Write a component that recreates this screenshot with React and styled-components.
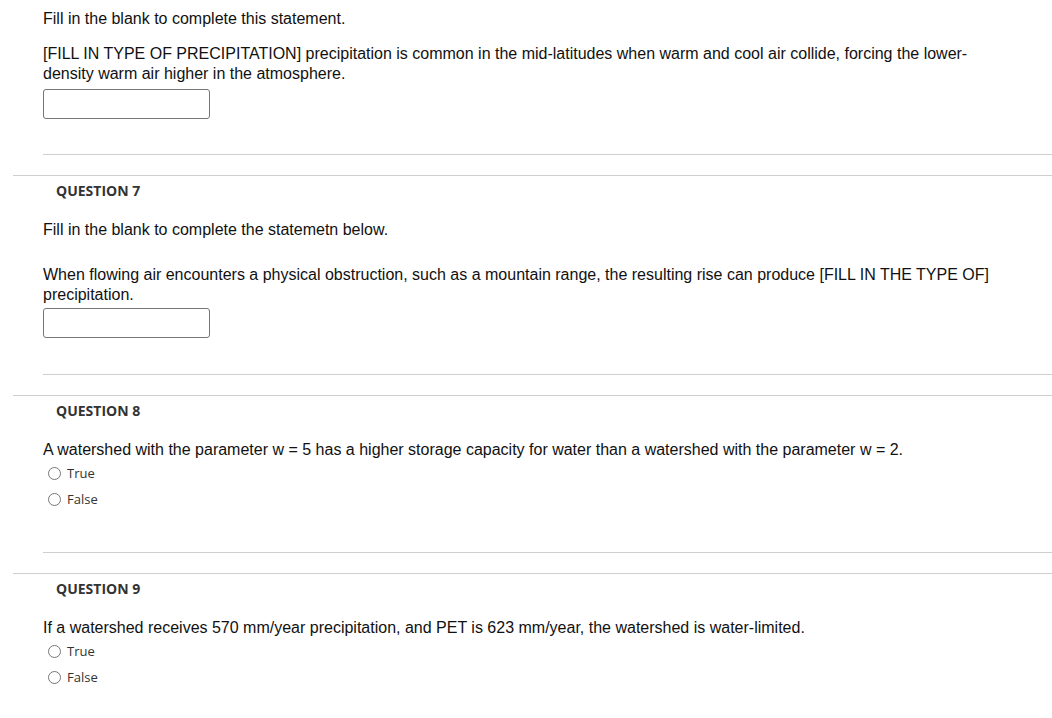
import { createGlobalStyle, styled } from "styled-components";

const GlobalStyle = createGlobalStyle`
  body {
    margin: 0;
    background: #ffffff;
    font-family: "Liberation Sans", Arial, sans-serif;
  }
`;

const Page = styled.div`
  width: 1052px;
  display: flex;
  flex-direction: column;
  padding-bottom: 30px;
`;

const Body = styled.div`
  padding-left: 43px;
  display: flex;
  flex-direction: column;
`;

const Text = styled.p`
  margin: ${(p) => p.$top || 0}px 0 0 0;
  max-width: 962px;
  font-size: 16px;
  line-height: 20px;
  color: #111;
`;

const BlankInput = styled.input`
  margin-top: ${(p) => p.$top || 0}px;
  width: 167px;
  height: 30px;
  box-sizing: border-box;
  border: 1px solid #767676;
  border-radius: 3px;
  outline: none;
  padding: 4px 6px;
  font-size: 14px;
`;

const Rule = styled.div`
  height: 1px;
  background: #cfcfcf;
  margin-left: ${(p) => p.$indent}px;
  margin-top: ${(p) => p.$top || 0}px;
`;

const Heading = styled.h3`
  margin: 5px 0 0 0;
  padding-left: 56px;
  font-family: "Open Sans", sans-serif;
  font-weight: 700;
  font-size: 14px;
  line-height: normal;
  color: #333;
`;

const Options = styled.div`
  margin-top: 4px;
  display: flex;
  flex-direction: column;
  gap: 8px;
  padding-left: 5px;
`;

const Option = styled.label`
  display: flex;
  align-items: center;
  gap: 6px;
  font-family: "Open Sans", sans-serif;
  font-size: 13px;
  line-height: normal;
  color: #333;
`;

const Radio = styled.input`
  appearance: none;
  margin: 0;
  width: 13px;
  height: 13px;
  border: 1px solid #767676;
  border-radius: 50%;
  background: #fff;
`;

const TrueFalse = ({ name }) => (
  <Options>
    <Option>
      <Radio type="radio" name={name} />
      True
    </Option>
    <Option>
      <Radio type="radio" name={name} />
      False
    </Option>
  </Options>
);

const App = () => {
  return (
    <Page>
      <GlobalStyle />
      <Body>
        <Text $top={9}>Fill in the blank to complete this statement.</Text>
        <Text $top={15}>
          [FILL IN TYPE OF PRECIPITATION] precipitation is common in the
          mid-latitudes when warm and cool air collide, forcing the lower-density
          warm air higher in the atmosphere.
        </Text>
        <BlankInput $top={5} />
      </Body>
      <Rule $indent={43} $top={35} />

      <Rule $indent={13} $top={20} />
      <Heading>QUESTION 7</Heading>
      <Body>
        <Text $top={20}>Fill in the blank to complete the statemetn below.</Text>
        <Text $top={25}>
          When flowing air encounters a physical obstruction, such as a mountain
          range, the resulting rise can produce [FILL IN THE TYPE OF]
          precipitation.
        </Text>
        <BlankInput $top={3} />
      </Body>
      <Rule $indent={43} $top={36} />

      <Rule $indent={13} $top={20} />
      <Heading>QUESTION 8</Heading>
      <Body>
        <Text $top={20}>
          A watershed with the parameter w = 5 has a higher storage capacity for
          water than a watershed with the parameter w = 2.
        </Text>
        <TrueFalse name="q8" />
      </Body>
      <Rule $indent={43} $top={44} />

      <Rule $indent={13} $top={20} />
      <Heading>QUESTION 9</Heading>
      <Body>
        <Text $top={20}>
          If a watershed receives 570 mm/year precipitation, and PET is 623
          mm/year, the watershed is water-limited.
        </Text>
        <TrueFalse name="q9" />
      </Body>
    </Page>
  );
};

export default App;
